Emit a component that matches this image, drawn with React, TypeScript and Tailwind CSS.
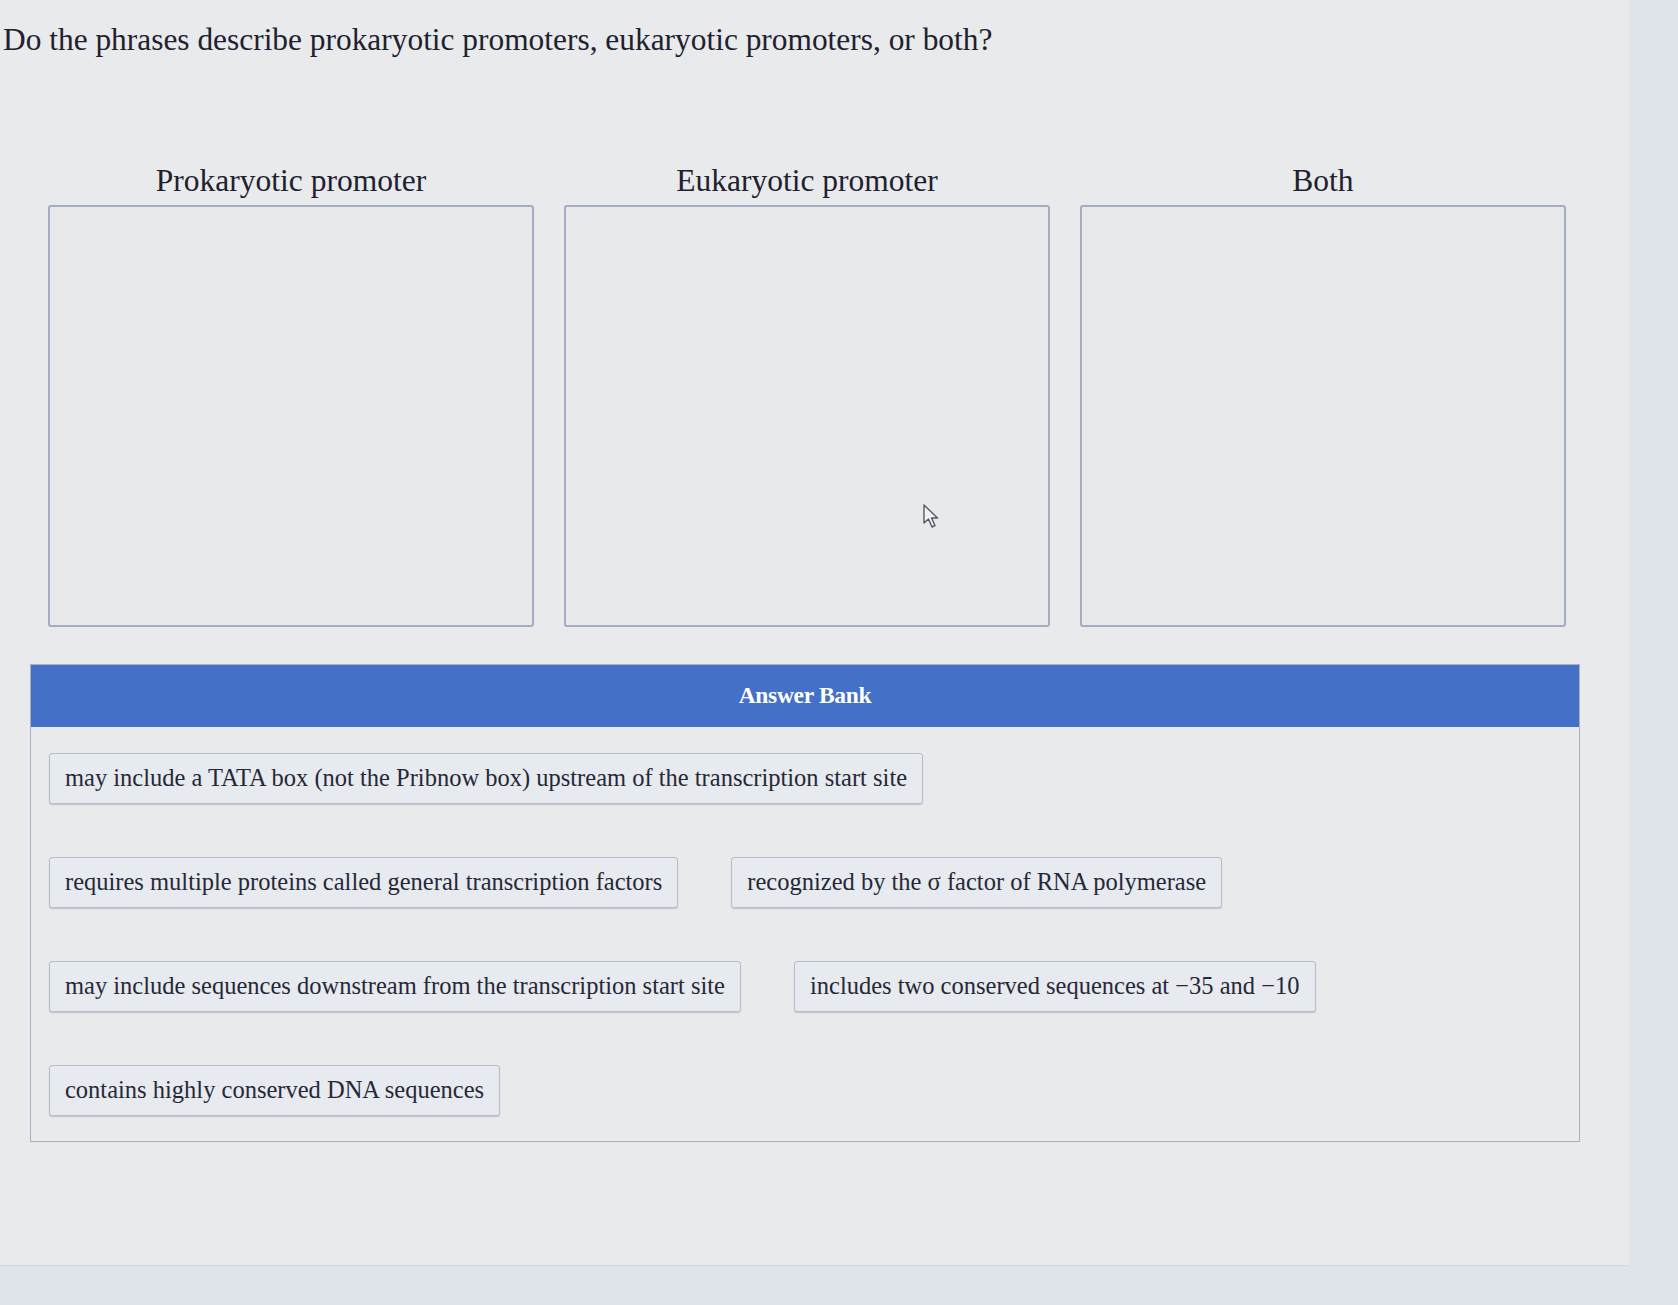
const columns = [
  { label: 'Prokaryotic promoter' },
  { label: 'Eukaryotic promoter' },
  { label: 'Both' },
];

const answerRows: string[][] = [
  ['may include a TATA box (not the Pribnow box) upstream of the transcription start site'],
  ['requires multiple proteins called general transcription factors', 'recognized by the σ factor of RNA polymerase'],
  ['may include sequences downstream from the transcription start site', 'includes two conserved sequences at −35 and −10'],
  ['contains highly conserved DNA sequences'],
];

function Chip({ text }: { text: string }) {
  return (
    <div className="h-[51px] flex items-center px-[15px] rounded-[3px] border border-[#b6bdcb] bg-[#e7eaee] shadow-[0_1px_1px_rgba(120,130,150,0.35)] text-[24.5px] text-[#262838] whitespace-nowrap">
      {text}
    </div>
  );
}

export default function App() {
  return (
    <div className="min-h-screen bg-[#dfe3ea] font-['Liberation_Serif',serif]">
      <div className="relative w-[1629px] h-[1266px] bg-[#e9eaeb] border-b border-[#d3d7de]">
        <h1 className="pl-[3px] pt-[20px] text-[31.4px] leading-[40px] text-[#1f2130]">
          Do the phrases describe prokaryotic promoters, eukaryotic promoters, or both?
        </h1>

        {/* drop targets */}
        <div className="grid grid-cols-3 gap-[30px] ml-[48px] w-[1518px] mt-[101px]">
          {columns.map((c) => (
            <div key={c.label} className="flex flex-col">
              <div className="text-center text-[31.5px] leading-[40px] text-[#1f2130]">{c.label}</div>
              <div className="mt-[4px] h-[422px] rounded-[3px] border-2 border-[#a4abc4] bg-[#e8e9ea]" />
            </div>
          ))}
        </div>

        {/* answer bank */}
        <div className="ml-[30px] w-[1550px] mt-[37px] border border-[#a9b0c4] bg-[#e9eaeb]">
          <div className="h-[62px] flex items-center justify-center bg-[#4470c8] text-white font-bold text-[23.5px] tracking-[-0.3px]">
            Answer Bank
          </div>
          <div className="flex flex-col gap-[53px] pl-[18px] pt-[26px] pb-[25px]">
            {answerRows.map((row, i) => (
              <div key={i} className="flex gap-[53px]">
                {row.map((t) => (
                  <Chip key={t} text={t} />
                ))}
              </div>
            ))}
          </div>
        </div>

        {/* mouse pointer */}
        <svg className="absolute left-[922px] top-[503px]" width="20" height="28" viewBox="0 0 20 28">
          <path d="M2 2 L2 20 L6.5 16 L10 24 L13 22.5 L9.5 15 L15.5 15 Z" fill="#f2f3f4" stroke="#555a66" strokeWidth="1.4" strokeLinejoin="round" />
        </svg>
      </div>
    </div>
  );
}
